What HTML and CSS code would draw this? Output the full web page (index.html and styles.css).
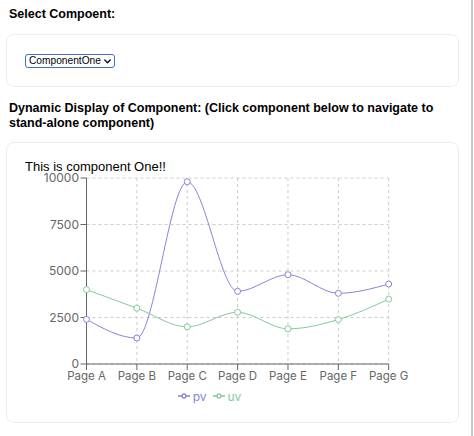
FILE: index.html
```html
<!DOCTYPE html>
<html lang="en">
<head>
<meta charset="utf-8">
<title>Components</title>
<link rel="stylesheet" href="styles.css">
</head>
<body>
<div class="page">
  <main class="content">
    <h2 class="title">Select Compoent:</h2>
    <div class="card card-select">
      <div class="select">
        <span class="select-text">ComponentOne</span>
        <svg class="chevron" width="7" height="5" viewBox="0 0 7 5"><path d="M0.8 0.9 L3.5 3.7 L6.2 0.9" fill="none" stroke="#111" stroke-width="1.4" stroke-linecap="round" stroke-linejoin="round"/></svg>
      </div>
    </div>
    <h2 class="title title-2">Dynamic Display of Component: (Click component below to navigate to<br>stand-alone component)</h2>
    <div class="card card-chart">
      <p class="caption">This is component One!!</p>
      <svg class="chart" width="410" height="214" viewBox="25 174 410 214">
        <g class="grid" stroke="#ccc" stroke-dasharray="3 3" fill="none">
          <path d="M86.5,178H388.7M86.5,224.5H388.7M86.5,271H388.7M86.5,317.5H388.7M86.5,364H388.7"/>
          <path d="M86.5,178V364M136.87,178V364M187.23,178V364M237.6,178V364M287.97,178V364M338.33,178V364M388.7,178V364"/>
        </g>
        <g class="axis" stroke="#666" fill="none">
          <path d="M86.5,178V364"/>
          <path d="M80.5,178H86.5M80.5,224.5H86.5M80.5,271H86.5M80.5,317.5H86.5M80.5,364H86.5"/>
          <path d="M86.5,364H388.7"/>
          <path d="M86.5,364V370M136.87,364V370M187.23,364V370M237.6,364V370M287.97,364V370M338.33,364V370M388.7,364V370"/>
        </g>
        <g class="tick-y" text-anchor="end">
          <text x="79" y="178" dy="0.355em">10000</text>
          <text x="79" y="224.5" dy="0.355em">7500</text>
          <text x="79" y="271" dy="0.355em">5000</text>
          <text x="79" y="317.5" dy="0.355em">2500</text>
          <text x="79" y="364" dy="0.355em">0</text>
        </g>
        <g class="tick-x" text-anchor="middle">
          <text x="86.5" y="372" dy="0.71em">Page A</text>
          <text x="136.87" y="372" dy="0.71em">Page B</text>
          <text x="187.23" y="372" dy="0.71em">Page C</text>
          <text x="237.6" y="372" dy="0.71em">Page D</text>
          <text x="287.97" y="372" dy="0.71em">Page E</text>
          <text x="338.33" y="372" dy="0.71em">Page F</text>
          <text x="388.7" y="372" dy="0.71em">Page G</text>
        </g>
        <path class="line-pv" d="M86.5,319.36C103.29,328.68 120.08,338 136.87,338C153.66,338 170.44,181.72 187.23,181.72C204.02,181.72 220.81,291.31 237.6,291.31C254.39,291.31 271.18,274.72 287.97,274.72C304.76,274.72 321.54,293.32 338.33,293.32C355.12,293.32 371.91,288.67 388.7,284.02"/>
        <path class="line-uv" d="M86.5,289.6C103.29,295.8 120.08,302 136.87,308.2C153.66,314.4 170.44,326.8 187.23,326.8C204.02,326.8 220.81,312.29 237.6,312.29C254.39,312.29 271.18,328.85 287.97,328.85C304.76,328.85 321.54,324.51 338.33,319.55C355.12,314.59 371.91,306.84 388.7,299.09"/>
        <g class="dots-pv">
          <circle cx="86.5" cy="319.36" r="3"/>
          <circle cx="136.87" cy="338" r="3"/>
          <circle cx="187.23" cy="181.72" r="3"/>
          <circle cx="237.6" cy="291.31" r="3"/>
          <circle cx="287.97" cy="274.72" r="3"/>
          <circle cx="338.33" cy="293.32" r="3"/>
          <circle cx="388.7" cy="284.02" r="3"/>
        </g>
        <g class="dots-uv">
          <circle cx="86.5" cy="289.6" r="3"/>
          <circle cx="136.87" cy="308.2" r="3"/>
          <circle cx="187.23" cy="326.8" r="3"/>
          <circle cx="237.6" cy="312.29" r="3"/>
          <circle cx="287.97" cy="328.85" r="3"/>
          <circle cx="338.33" cy="319.55" r="3"/>
          <circle cx="388.7" cy="299.09" r="3"/>
        </g>
      </svg>
      <ul class="legend">
        <li class="legend-item legend-pv">
          <svg class="legend-icon" width="12" height="12" viewBox="0 0 32 32"><path d="M0,16h10.67A5.33,5.33,0,1,1,21.33,16H32M21.33,16A5.33,5.33,0,1,1,10.67,16" fill="none" stroke="#8884d8" stroke-width="4"/></svg>
          <span>pv</span>
        </li>
        <li class="legend-item legend-uv">
          <svg class="legend-icon" width="12" height="12" viewBox="0 0 32 32"><path d="M0,16h10.67A5.33,5.33,0,1,1,21.33,16H32M21.33,16A5.33,5.33,0,1,1,10.67,16" fill="none" stroke="#82ca9d" stroke-width="4"/></svg>
          <span>uv</span>
        </li>
      </ul>
    </div>
  </main>
  <div class="edge"></div>
</div>
</body>
</html>
```
FILE: styles.css
```css
html, body {
  margin: 0;
  padding: 0;
  background: #fff;
}

body {
  font-family: "Liberation Sans", Arial, sans-serif;
  color: #000;
}

.page {
  display: flex;
  min-height: 436px;
}

.content {
  width: 471px;
  box-sizing: border-box;
  padding: 7px 12px 0 6px;
}

.edge {
  width: 2px;
  background: #c9c9c9;
}

.title {
  margin: 0 0 12px 3px;
  font-size: 12.5px;
  line-height: 15px;
  font-weight: 700;
}

.title-2 {
  margin: 14px 0 11px 3px;
  line-height: 15px;
}

.card {
  border: 1px solid #ececec;
  border-radius: 8px;
}

.card-select {
  display: flex;
  align-items: flex-start;
  padding: 19px 18px 18px;
}

.select {
  display: flex;
  align-items: center;
  box-sizing: border-box;
  height: 14px;
  padding: 0 3px;
  gap: 3px;
  border: 1px solid #3f6fc6;
  border-radius: 3px;
  font-size: 10.2px;
  line-height: 12px;
  color: #000;
}

.chevron {
  display: block;
}

.card-chart {
  padding: 16px 18px 18px;
}

.caption {
  margin: 0;
  font-size: 13px;
  line-height: 15px;
}

.chart {
  display: block;
  overflow: visible;
}

.tick-y text,
.tick-x text {
  font-family: Inter, "Liberation Sans", sans-serif;
  font-size: 11.5px;
  fill: #666;
}

.tick-y text {
  font-size: 12px;
}

.line-pv {
  fill: none;
  stroke: #8884d8;
  stroke-width: 1;
}

.line-uv {
  fill: none;
  stroke: #82ca9d;
  stroke-width: 1;
}

.dots-pv circle {
  fill: #fff;
  stroke: #8884d8;
}

.dots-uv circle {
  fill: #fff;
  stroke: #82ca9d;
}

.legend {
  list-style: none;
  margin: 0;
  padding: 0;
  width: 369px;
  height: 16px;
  display: flex;
  justify-content: center;
  align-items: center;
  gap: 6px;
  font-family: Inter, "Liberation Sans", sans-serif;
  font-size: 12px;
}

.legend-item {
  display: flex;
  align-items: center;
  gap: 3px;
}

.legend-pv { color: #8884d8; }
.legend-uv { color: #82ca9d; }

.legend-icon {
  display: block;
}
```
